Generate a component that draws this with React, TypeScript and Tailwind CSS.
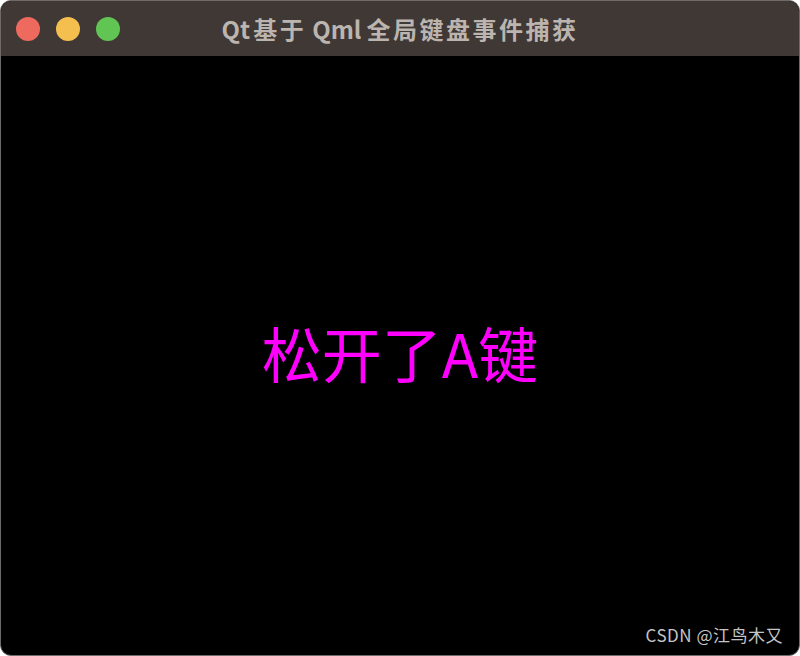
import React from 'react';

const cjk = '"Noto Sans CJK SC", "Noto Sans", sans-serif';

export default function App() {
  return (
    <div className="w-[800px] h-[656px] bg-white">
      <div className="w-full h-full flex flex-col rounded-[11px] overflow-hidden border border-[#6e6a68] bg-black">
        <div className="relative h-[55px] shrink-0 bg-[#3f3835] flex items-center">
          <div className="flex items-center gap-4 pl-[15px]">
            <span className="w-6 h-6 rounded-full bg-[#ee6a5e]" />
            <span className="w-6 h-6 rounded-full bg-[#f5bf4f]" />
            <span className="w-6 h-6 rounded-full bg-[#61c554]" />
          </div>
          <div
            className="absolute inset-0 flex items-center justify-center text-[24px] font-bold text-[#bcb4af] whitespace-pre"
            style={{ fontFamily: cjk }}
          >
            <span>Qt</span>
            <span className="ml-[3px] tracking-[2.5px]">基于</span>
            <span className="ml-[6px]">Qml</span>
            <span className="ml-[5px] tracking-[2.5px]">全局键盘事件捕获</span>
          </div>
        </div>
        <div className="flex-1 flex flex-col">
          <div className="flex-1 flex items-center justify-center pt-[26px]">
            <span className="text-[60px] leading-none text-[#ff00ff]" style={{ fontFamily: cjk }}>
              松开了A键
            </span>
          </div>
          <div className="flex justify-end pr-[16px] pb-[8px]">
            <span className="text-[17px] tracking-[0.5px] text-[#c4c4c4]" style={{ fontFamily: cjk }}>
              CSDN @江鸟木又
            </span>
          </div>
        </div>
      </div>
    </div>
  );
}
